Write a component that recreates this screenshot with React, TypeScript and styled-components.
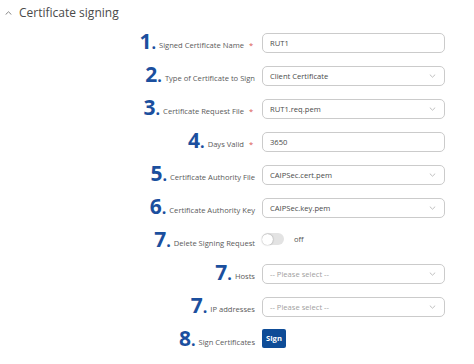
import * as React from "react";
import styled, { createGlobalStyle } from "styled-components";

const GlobalStyle = createGlobalStyle`
  html, body {
    margin: 0;
    padding: 0;
    background: #ffffff;
    font-family: "Open Sans", "Liberation Sans", sans-serif;
  }
`;

type Field = {
  num: string;
  label: string;
  required?: boolean;
  kind: "text" | "select" | "toggle" | "button";
  value?: string;
  placeholder?: boolean;
};

const fields: Field[] = [
  { num: "1", label: "Signed Certificate Name", required: true, kind: "text", value: "RUT1" },
  { num: "2", label: "Type of Certificate to Sign", kind: "select", value: "Client Certificate" },
  { num: "3", label: "Certificate Request File", required: true, kind: "select", value: "RUT1.req.pem" },
  { num: "4", label: "Days Valid", required: true, kind: "text", value: "3650" },
  { num: "5", label: "Certificate Authority File", kind: "select", value: "CAIPSec.cert.pem" },
  { num: "6", label: "Certificate Authority Key", kind: "select", value: "CAIPSec.key.pem" },
  { num: "7", label: "Delete Signing Request", kind: "toggle" },
  { num: "7", label: "Hosts", kind: "select", value: "-- Please select --", placeholder: true },
  { num: "7", label: "IP addresses", kind: "select", value: "-- Please select --", placeholder: true },
  { num: "8", label: "Sign Certificates", kind: "button" },
];

const Chevron = ({ up }: { up?: boolean }) => (
  <svg width="7" height="4" viewBox="0 0 7 4">
    <path
      d={up ? "M0.6 3.6 L3.5 0.8 L6.4 3.6" : "M0.8 0.6 L3.5 3.2 L6.2 0.6"}
      fill="none"
      stroke={up ? "#777" : "#b8b8b8"}
      strokeWidth="0.9"
    />
  </svg>
);

export default function App() {
  return (
    <>
      <GlobalStyle />
      <Page>
        <Header>
          <Chevron up />
          <Title>Certificate signing</Title>
        </Header>
        <Form>
          {fields.map((f, i) => (
            <Row key={i}>
              <Label>
                <Num>
                  {f.num}
                  <Dot>.</Dot>
                </Num>
                <LabelText>{f.label}</LabelText>
                {f.required ? <Star>*</Star> : <Spacer />}
              </Label>
              <Control>
                {f.kind === "text" && <Input>{f.value}</Input>}
                {f.kind === "select" && (
                  <Input>
                    <SelectText $placeholder={f.placeholder}>{f.value}</SelectText>
                    <Chevron />
                  </Input>
                )}
                {f.kind === "toggle" && (
                  <ToggleWrap>
                    <Track>
                      <Knob />
                    </Track>
                    <ToggleText>off</ToggleText>
                  </ToggleWrap>
                )}
                {f.kind === "button" && <SignButton>Sign</SignButton>}
              </Control>
            </Row>
          ))}
        </Form>
      </Page>
    </>
  );
}

const Page = styled.div`
  width: 474px;
  height: 364px;
  overflow: hidden;
  background: #fff;
`;

const Header = styled.div`
  height: 26px;
  display: flex;
  align-items: center;
  gap: 7px;
  padding-left: 5px;
`;

const Title = styled.div`
  font-size: 12px;
  color: #4a4a4a;
  line-height: 1;
`;

const Form = styled.div`
  display: flex;
  flex-direction: column;
`;

const Row = styled.div`
  height: 33px;
  display: grid;
  grid-template-columns: 256px 183px;
  column-gap: 6px;
  align-items: center;
`;

const Label = styled.div`
  display: flex;
  justify-content: flex-end;
  align-items: baseline;
  position: relative;
  top: -1px;
`;

const Num = styled.span`
  font-family: "Open Sans", "Liberation Sans", sans-serif;
  font-weight: 700;
  font-size: 21px;
  color: #1b4f9e;
  line-height: 1;
  margin-right: 3px;
`;

const Dot = styled.span`
  font-size: 16px;
`;

const LabelText = styled.span`
  font-size: 7.6px;
  color: #5a5a5a;
  position: relative;
  top: -1px;
`;

const Star = styled.span`
  font-size: 7.6px;
  color: #d9534f;
  margin-left: 5px;
  width: 7px;
  position: relative;
  top: -1px;
`;

const Spacer = styled.span`
  width: 1px;
`;

const Control = styled.div`
  display: flex;
  align-items: center;
`;

const Input = styled.div`
  box-sizing: border-box;
  width: 183px;
  height: 20px;
  border: 1px solid #cbcbcb;
  border-radius: 5px;
  padding: 0 8px 0 7px;
  display: flex;
  align-items: center;
  justify-content: space-between;
  font-size: 7.6px;
  color: #4a4a4a;
`;

const SelectText = styled.span<{ $placeholder?: boolean }>`
  color: ${(p) => (p.$placeholder ? "#a0a0a0" : "#4a4a4a")};
`;

const ToggleWrap = styled.div`
  display: flex;
  align-items: center;
  gap: 10px;
  margin-top: -3px;
`;

const Track = styled.div`
  width: 22px;
  height: 12px;
  border-radius: 6px;
  background: #e3e3e3;
  display: flex;
  align-items: center;
`;

const Knob = styled.div`
  width: 11px;
  height: 11px;
  border-radius: 50%;
  background: #fff;
  box-shadow: 0 0 1.5px rgba(0, 0, 0, 0.45);
`;

const ToggleText = styled.span`
  font-size: 7.6px;
  color: #555;
`;

const SignButton = styled.div`
  width: 24px;
  height: 19px;
  border-radius: 2px;
  background: #0e4c97;
  color: #fff;
  font-size: 7.6px;
  font-weight: 700;
  display: flex;
  align-items: center;
  justify-content: center;
  margin-top: -3px;
`;
